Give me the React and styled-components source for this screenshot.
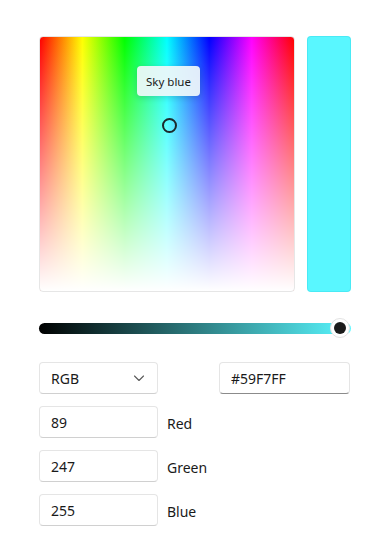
import React from "react";
import styled, { createGlobalStyle } from "styled-components";

const Global = createGlobalStyle`
  html, body { margin: 0; padding: 0; background: #ffffff; }
  body { font-family: "Noto Sans", "Open Sans", sans-serif; color: #1a1a1a; }
`;

const Page = styled.div`
  width: 391px;
  height: 559px;
  box-sizing: border-box;
  padding: 36px 0 0 39px;
  display: flex;
  flex-direction: column;
`;

const TopRow = styled.div`
  display: flex;
  gap: 12px;
  height: 256px;
`;

const Spectrum = styled.div`
  position: relative;
  width: 256px;
  height: 256px;
  box-sizing: border-box;
  border-radius: 4px;
  border: 1px solid #e6e6e6;
  background:
    linear-gradient(to bottom, rgba(255,255,255,0) 0%, rgba(255,255,255,1) 100%),
    linear-gradient(to right, #ff0000 0%, #ffff00 16.67%, #00ff00 33.33%, #00ffff 50%, #0000ff 66.67%, #ff00ff 83.33%, #ff0000 100%);
`;

const Tooltip = styled.div`
  position: absolute;
  left: 97px;
  top: 29px;
  width: 63px;
  height: 30px;
  box-sizing: border-box;
  border-radius: 4px;
  background: rgba(240, 248, 250, 0.93);
  box-shadow: 0 2px 6px rgba(0,0,0,0.14);
  display: flex;
  align-items: center;
  justify-content: center;
  font-size: 11.5px;
  color: #1a1a1a;
`;

const Marker = styled.div`
  position: absolute;
  left: 122px;
  top: 81px;
  width: 15px;
  height: 15px;
  box-sizing: border-box;
  border-radius: 50%;
  border: 2px solid #1c2a2c;
`;

const Preview = styled.div`
  width: 44px;
  height: 256px;
  box-sizing: border-box;
  border-radius: 4px;
  background: ${(p) => p.$color};
  border: 1px solid rgba(0, 180, 200, 0.18);
`;

const SliderRow = styled.div`
  position: relative;
  width: 312px;
  height: 20px;
  margin-top: 26px;
  display: flex;
  align-items: center;
`;

const Track = styled.div`
  width: 100%;
  height: 11px;
  border-radius: 6px;
  background: linear-gradient(to right, #000000, ${(p) => p.$color});
`;

const Thumb = styled.div`
  position: absolute;
  right: 1px;
  top: 0;
  width: 20px;
  height: 20px;
  box-sizing: border-box;
  border-radius: 50%;
  background: #ffffff;
  border: 1px solid #e3e3e3;
  display: flex;
  align-items: center;
  justify-content: center;
  &::after {
    content: "";
    width: 12px;
    height: 12px;
    border-radius: 50%;
    background: #1b1b1b;
  }
`;

const ModeRow = styled.div`
  display: flex;
  justify-content: space-between;
  width: 311px;
  margin-top: 24px;
`;

const Field = styled.div`
  width: ${(p) => p.$w}px;
  height: 32px;
  box-sizing: border-box;
  border-radius: 4px;
  background: #ffffff;
  border: 1px solid #e5e5e5;
  border-bottom-color: ${(p) => (p.$strong ? "#8b8b8b" : "#d0d0d0")};
  display: flex;
  align-items: center;
  justify-content: space-between;
  padding: 0 12px 0 11px;
  font-size: 14px;
  color: #1a1a1a;
`;

const Chevron = () => (
  <svg width="12" height="12" viewBox="0 0 12 12" fill="none">
    <path d="M1.5 4 L6 8.5 L10.5 4" stroke="#5a5a5a" strokeWidth="1.1" strokeLinecap="round" strokeLinejoin="round" />
  </svg>
);

const Channels = styled.div`
  display: flex;
  flex-direction: column;
  gap: 12px;
  margin-top: 12px;
`;

const ChannelRow = styled.div`
  display: flex;
  align-items: center;
  gap: 9px;
`;

const Label = styled.span`
  font-size: 14px;
  color: #1a1a1a;
  padding-top: 2px;
`;

const channels = [
  { v: "89", l: "Red" },
  { v: "247", l: "Green" },
  { v: "255", l: "Blue" },
];

export default function App() {
  const color = "#59F7FF";
  return (
    <>
      <Global />
      <Page>
        <TopRow>
          <Spectrum>
            <Tooltip>Sky blue</Tooltip>
            <Marker />
          </Spectrum>
          <Preview $color={color} />
        </TopRow>
        <SliderRow>
          <Track $color={color} />
          <Thumb />
        </SliderRow>
        <ModeRow>
          <Field $w={119}>
            <span>RGB</span>
            <Chevron />
          </Field>
          <Field $w={131} $strong>#59F7FF</Field>
        </ModeRow>
        <Channels>
          {channels.map((c) => (
            <ChannelRow key={c.l}>
              <Field $w={119}>{c.v}</Field>
              <Label>{c.l}</Label>
            </ChannelRow>
          ))}
        </Channels>
      </Page>
    </>
  );
}
